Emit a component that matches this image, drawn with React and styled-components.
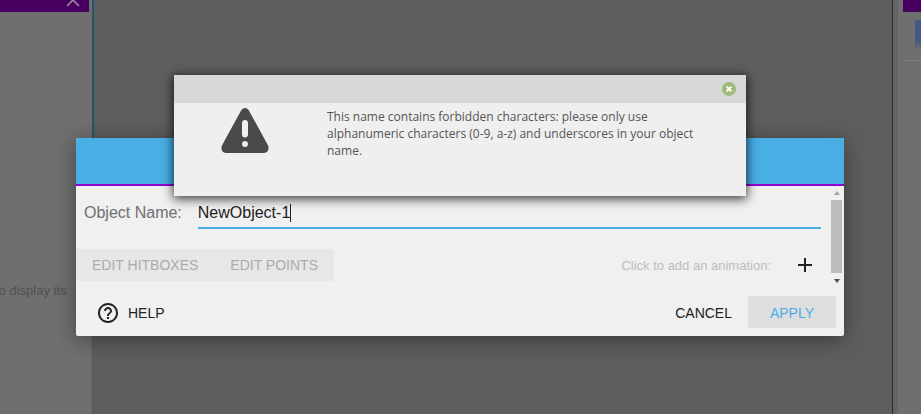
import React from 'react'
import styled, { createGlobalStyle } from 'styled-components'

const Global = createGlobalStyle`
    html, body {
        margin: 0;
        height: 100%;
        overflow: hidden;
        background: #5e5e5e;
        font-family: "Liberation Sans", Arial, sans-serif;
    }
`

const Page = styled.div`
    position: relative;
    width: 921px;
    height: 414px;
    overflow: hidden;
    display: grid;
    grid-template-columns: 92px 1fr 29px;
`

const LeftPanel = styled.div`
    background: #6f6f6f;
    overflow: hidden;
    display: flex;
    flex-direction: column;
    justify-content: space-between;
`

const LeftHeader = styled.div`
    height: 12px;
    width: 89px;
    background: #470060;
    position: relative;
    overflow: hidden;
`

const CloseMark = styled.svg`
    position: absolute;
    left: 65px;
    top: -7px;
    width: 16px;
    height: 16px;
`

const LeftHint = styled.div`
    margin: 0 0 115px -5px;
    font-size: 13px;
    line-height: 16px;
    color: #505050;
    white-space: nowrap;
`

const Canvas = styled.div`
    background: #5e5e5e;
    border-left: 1px solid #585858;
`

const CanvasAccent = styled.div`
    width: 2px;
    height: 138px;
    margin-left: -1px;
    background: #22566f;
`

const RightPanel = styled.div`
    background: linear-gradient(to right, #646464 5px, #6f6f6f 5px);
    border-left: 1px solid #2c2c2c;
    padding-left: 10px;
`

const RightHeader = styled.div`
    height: 12px;
    background: #470060;
`

const RightThumb = styled.div`
    margin: 8px 0 0 12px;
    height: 30px;
    background: linear-gradient(#43597f 70%, #6f6f6f);
`

const RightRule = styled.div`
    margin: 10px 0 0 1px;
    height: 1px;
    background: #808080;
`

const Dialog = styled.div`
    position: absolute;
    left: 76px;
    top: 138px;
    width: 768px;
    height: 198px;
    background: #f0f0f0;
    border-radius: 0 0 2px 2px;
    box-shadow: 0 4px 22px rgba(0, 0, 0, 0.4);
    display: flex;
    flex-direction: column;
`

const DialogHead = styled.div`
    height: 46px;
    background: #48aee4;
    border-bottom: 2px solid #9100ce;
    flex: none;
`

const Body = styled.div`
    flex: 1;
    min-height: 0;
    display: grid;
    grid-template-columns: 1fr 11px;
    padding-right: 2px;
`

const Form = styled.div`
    padding: 8px 10px 0 8px;
`

const NameRow = styled.div`
    display: flex;
    align-items: flex-start;
    gap: 16px;
    height: 35px;
`

const NameLabel = styled.label`
    font-size: 16px;
    line-height: 37px;
    color: #6f6f6f;
    white-space: nowrap;
`

const NameField = styled.div`
    flex: 1;
    height: 33px;
    line-height: 37px;
    font-size: 16px;
    color: #222;
    border-bottom: 2px solid #48aee4;
`

const Caret = styled.span`
    display: inline-block;
    width: 1px;
    height: 18px;
    background: #222;
    vertical-align: -4px;
`

const ToolRow = styled.div`
    display: flex;
    align-items: center;
    margin: 20px 0 0 -8px;
`

const ToolButton = styled.div`
    height: 32px;
    line-height: 33px;
    padding: 0 16px;
    background: #e7e7e7;
    color: #ababab;
    font-size: 14px;
    white-space: nowrap;
`

const AddHint = styled.span`
    margin-left: auto;
    font-size: 13px;
    color: #bdbdbd;
    white-space: nowrap;
`

const AddIcon = styled.svg`
    width: 24px;
    height: 24px;
    margin: 0 4px 0 22px;
`

const Scroller = styled.div`
    display: flex;
    flex-direction: column;
    align-items: center;
    padding-top: 5px;
`

const Arrow = styled.div`
    width: 0;
    height: 0;
    border-left: 3.5px solid transparent;
    border-right: 3.5px solid transparent;
    ${props => props.$down
        ? 'border-top: 4px solid #505050; margin-top: 6px;'
        : 'border-bottom: 4px solid #a3a3a3; margin-bottom: 5px;'}
`

const Thumb = styled.div`
    width: 11px;
    height: 73px;
    background: #bdbdbd;
`

const Footer = styled.div`
    height: 46px;
    flex: none;
    box-sizing: border-box;
    padding: 6px 8px 0 20px;
    display: flex;
    align-items: flex-start;
    font-size: 14px;
    line-height: 34px;
    color: #222;
`

const HelpButton = styled.div`
    display: flex;
    align-items: center;
    gap: 8px;
    margin-right: auto;
`

const HelpIcon = styled.svg`
    width: 24px;
    height: 24px;
`

const CancelButton = styled.div`
    padding: 0 16px;
`

const ApplyButton = styled.div`
    width: 88px;
    height: 32px;
    text-align: center;
    background: #dedede;
    color: #48aee4;
`

const Alert = styled.div`
    position: absolute;
    left: 174px;
    top: 75px;
    width: 572px;
    height: 121px;
    background: #efefef;
    box-shadow: 0 2px 10px 1px rgba(0, 0, 0, 0.75);
    font-family: "Open Sans", sans-serif;
    display: flex;
    flex-direction: column;
`

const AlertBar = styled.div`
    height: 28px;
    flex: none;
    background: #d8d8d8;
    display: flex;
    align-items: center;
    justify-content: flex-end;
    padding-right: 10px;
`

const AlertClose = styled.svg`
    width: 14px;
    height: 14px;
`

const AlertBody = styled.div`
    display: flex;
    align-items: flex-start;
`

const WarnIcon = styled.svg`
    width: 48px;
    height: 45px;
    margin: 5px 0 0 47px;
    flex: none;
`

const AlertText = styled.p`
    margin: 5px 0 0 58px;
    width: 385px;
    font-size: 12px;
    line-height: 17px;
    color: #555;
`

export default function App() {
    return (
        <Page>
            <Global />
            <LeftPanel>
                <LeftHeader>
                    <CloseMark viewBox="0 0 16 16">
                        <path d="M2 1l12 12M14 1L2 13" stroke="#9d8aa6" strokeWidth="1.6" fill="none" />
                    </CloseMark>
                </LeftHeader>
                <LeftHint>to display its</LeftHint>
            </LeftPanel>
            <Canvas>
                <CanvasAccent />
            </Canvas>
            <RightPanel>
                <RightHeader />
                <RightThumb />
                <RightRule />
            </RightPanel>

            <Dialog>
                <DialogHead />
                <Body>
                    <Form>
                        <NameRow>
                            <NameLabel>Object Name:</NameLabel>
                            <NameField>NewObject-1<Caret /></NameField>
                        </NameRow>
                        <ToolRow>
                            <ToolButton>EDIT HITBOXES</ToolButton>
                            <ToolButton>EDIT POINTS</ToolButton>
                            <AddHint>Click to add an animation:</AddHint>
                            <AddIcon viewBox="0 0 24 24">
                                <path d="M19 13h-6v6h-2v-6H5v-2h6V5h2v6h6v2z" fill="#222" />
                            </AddIcon>
                        </ToolRow>
                    </Form>
                    <Scroller>
                        <Arrow />
                        <Thumb />
                        <Arrow $down />
                    </Scroller>
                </Body>
                <Footer>
                    <HelpButton>
                        <HelpIcon viewBox="0 0 24 24">
                            <path fill="#222" d="M11 18h2v-2h-2v2zm1-16C6.48 2 2 6.48 2 12s4.48 10 10 10 10-4.48 10-10S17.52 2 12 2zm0 18c-4.41 0-8-3.59-8-8s3.59-8 8-8 8 3.59 8 8-3.59 8-8 8zm0-14c-2.21 0-4 1.79-4 4h2c0-1.1.9-2 2-2s2 .9 2 2c0 2-3 1.75-3 5h2c0-2.25 3-2.5 3-5 0-2.21-1.79-4-4-4z" />
                        </HelpIcon>
                        HELP
                    </HelpButton>
                    <CancelButton>CANCEL</CancelButton>
                    <ApplyButton>APPLY</ApplyButton>
                </Footer>
            </Dialog>

            <Alert>
                <AlertBar>
                    <AlertClose viewBox="0 0 14 14">
                        <circle cx="7" cy="7" r="7" fill="#9dbb7a" />
                        <path d="M4.6 4.6l4.8 4.8M9.4 4.6l-4.8 4.8" stroke="#fff" strokeWidth="2" />
                    </AlertClose>
                </AlertBar>
                <AlertBody>
                    <WarnIcon viewBox="0 0 48 45">
                        <path fill="#4a4a4a" fillRule="evenodd" d="M24 0c1.6 0 3 .9 3.900 2.500L46.800 37c1.800 3.300.4 8-3.800 8H5c-4.200 0-5.600-4.700-3.800-8L20.100 2.500C21 .9 22.400 0 24 0zM24 12c-1.700 0-3 1.300-3 3v11.500c0 1.700 1.300 3 3 3s3-1.300 3-3V15c0-1.700-1.300-3-3-3zM24 33c-1.700 0-3 1.300-3 3s1.300 3 3 3 3-1.300 3-3-1.300-3-3-3z" />
                    </WarnIcon>
                    <AlertText>
                        This name contains forbidden characters: please only use alphanumeric characters (0-9, a-z) and underscores in your object name.
                    </AlertText>
                </AlertBody>
            </Alert>
        </Page>
    )
}
